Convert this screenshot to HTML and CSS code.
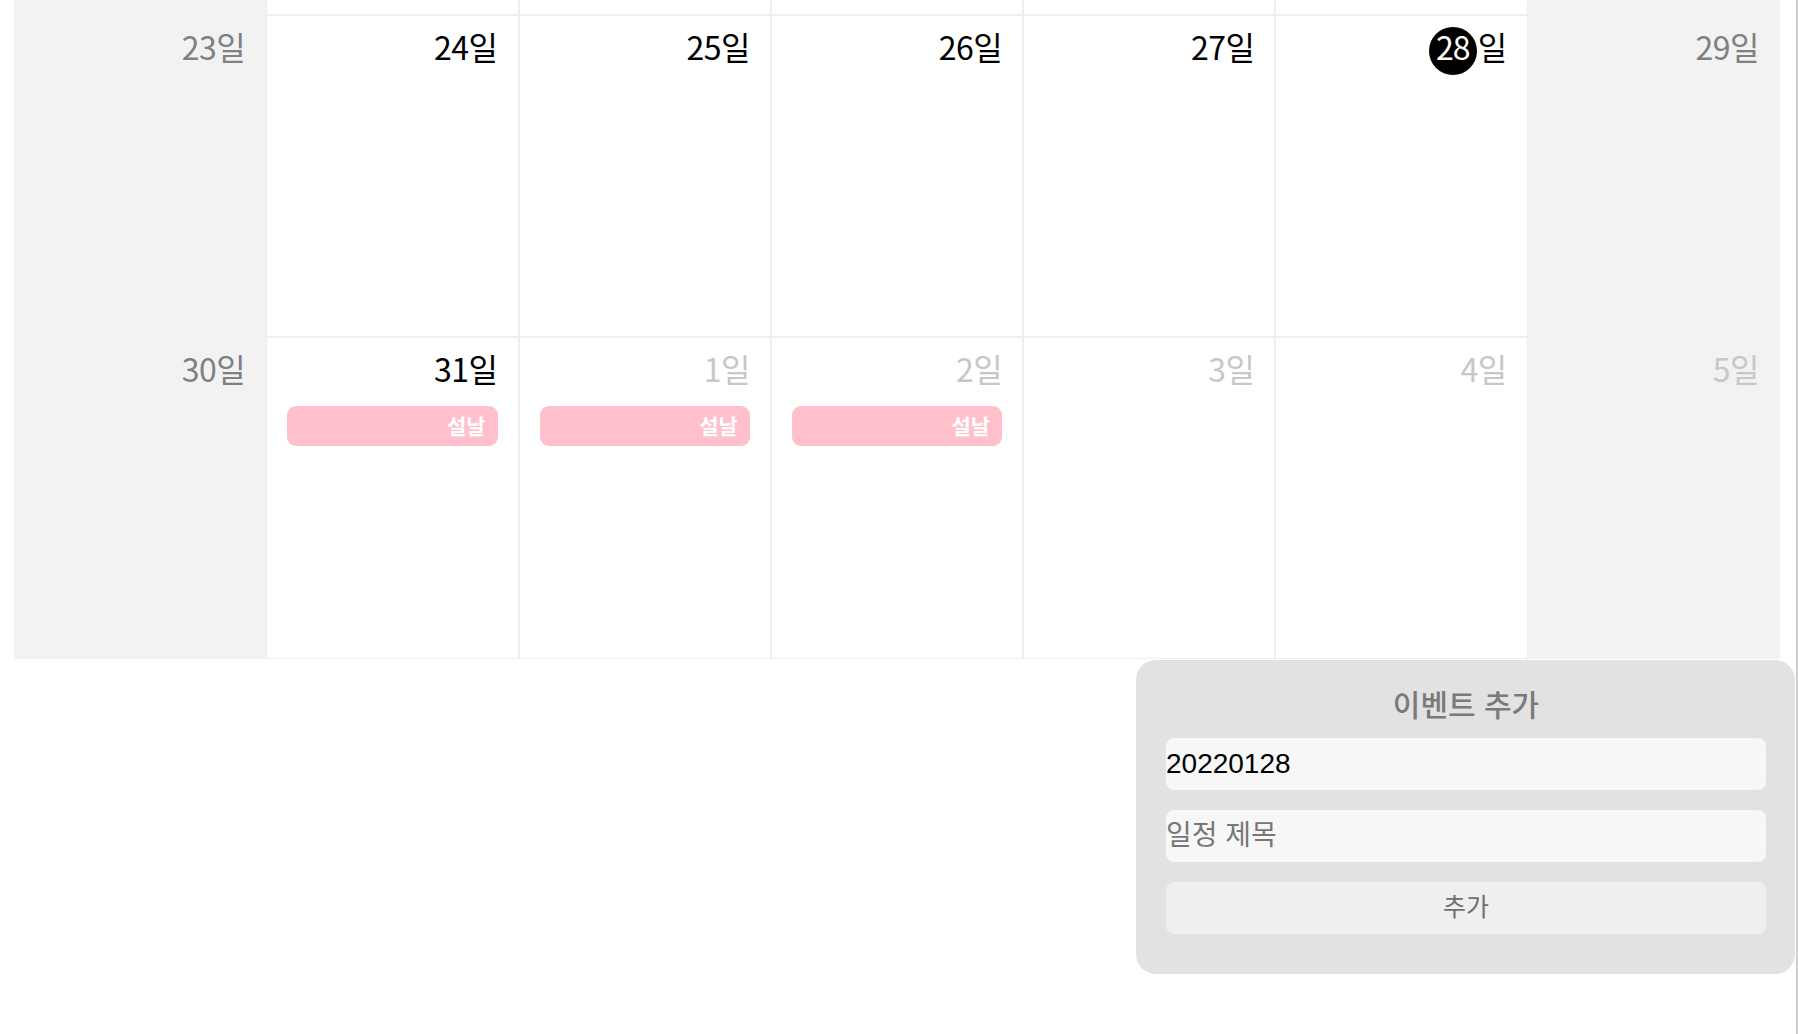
FILE: index.html
```html
<!DOCTYPE html>
<html lang="ko">
<head>
<meta charset="utf-8">
<title>캘린더</title>
<link rel="stylesheet" href="styles.css">
</head>
<body>
<div class="page">
  <main class="calendar">
    <div class="week week-partial">
      <div class="cell weekend"></div>
      <div class="cell"></div>
      <div class="cell"></div>
      <div class="cell"></div>
      <div class="cell"></div>
      <div class="cell"></div>
      <div class="cell weekend"></div>
    </div>
    <div class="week">
      <div class="cell weekend"><div class="day">23일</div></div>
      <div class="cell"><div class="day">24일</div></div>
      <div class="cell"><div class="day">25일</div></div>
      <div class="cell"><div class="day">26일</div></div>
      <div class="cell"><div class="day">27일</div></div>
      <div class="cell"><div class="day"><span class="today">28</span>일</div></div>
      <div class="cell weekend"><div class="day">29일</div></div>
    </div>
    <div class="week">
      <div class="cell weekend"><div class="day">30일</div></div>
      <div class="cell"><div class="day">31일</div><div class="event">설날</div></div>
      <div class="cell other"><div class="day">1일</div><div class="event">설날</div></div>
      <div class="cell other"><div class="day">2일</div><div class="event">설날</div></div>
      <div class="cell other"><div class="day">3일</div></div>
      <div class="cell other"><div class="day">4일</div></div>
      <div class="cell weekend other"><div class="day">5일</div></div>
    </div>
  </main>
  <div class="spacer"></div>
  <div class="scroll-edge"></div>
</div>

<form class="add-event">
  <h2 class="add-title">이벤트 추가</h2>
  <input class="field" type="text" value="20220128">
  <input class="field" type="text" placeholder="일정 제목">
  <button class="add-btn" type="button">추가</button>
</form>
</body>
</html>
```

FILE: styles.css
```css
html, body {
  margin: 0;
  padding: 0;
  background: #ffffff;
}

body {
  font-family: "Noto Sans CJK KR", "Noto Sans", sans-serif;
  overflow: hidden;
}

.page {
  display: flex;
  height: 1034px;
}

.calendar {
  margin-left: 14px;
  width: 1766px;
  flex: none;
}

.spacer {
  flex: 1;
}

.scroll-edge {
  width: 2px;
  background: #cfcfcf;
}

.week {
  display: grid;
  grid-template-columns: repeat(7, 1fr);
  height: 322px;
}

.week-partial {
  height: 15px;
}

.week-partial .cell {
  border-top: none;
}

.cell {
  box-sizing: border-box;
  border: 1px solid #efefef;
  padding: 6px 20px 0 20px;
  background: #ffffff;
  overflow: hidden;
}

.cell.weekend {
  background: #f2f2f2;
  border-color: #f2f2f2;
}

.day {
  text-align: right;
  font-size: 32px;
  line-height: 48px;
  height: 48px;
  color: #000000;
  letter-spacing: -0.5px;
}

.weekend .day {
  color: #808080;
}

.other .day {
  color: #c7c7c7;
}

.today {
  display: inline-block;
  box-sizing: border-box;
  width: 48px;
  height: 48px;
  line-height: 39px;
  border-radius: 50%;
  background: #000000;
  color: #ffffff;
  text-align: center;
  margin-right: 1px;
  letter-spacing: -1px;
}

.event {
  margin-top: 14px;
  height: 40px;
  line-height: 38px;
  border-radius: 9px;
  background: #ffc0cb;
  color: #ffffff;
  font-size: 21px;
  font-weight: 700;
  text-align: right;
  padding-right: 12px;
}

.add-event {
  position: fixed;
  top: 660px;
  right: 3px;
  width: 659px;
  height: 314px;
  box-sizing: border-box;
  padding: 23px 29px 0 30px;
  background: #e2e2e2;
  border-radius: 20px;
  display: flex;
  flex-direction: column;
}

.add-title {
  margin: 0 0 15px 0;
  height: 40px;
  line-height: 40px;
  text-align: center;
  font-family: "Noto Sans CJK KR", sans-serif;
  font-size: 30px;
  font-weight: 500;
  color: #7a7a7a;
}

.field {
  display: block;
  box-sizing: border-box;
  height: 52px;
  width: 100%;
  margin: 0 0 20px 0;
  padding: 0;
  border: none;
  outline: none;
  border-radius: 8px;
  background: #f7f7f7;
  font-family: "Liberation Sans", "Noto Sans CJK KR", sans-serif;
  font-size: 28px;
  color: #000000;
}

.field::placeholder {
  color: #777777;
}

.add-btn {
  display: block;
  box-sizing: border-box;
  height: 52px;
  width: 100%;
  margin: 0;
  padding: 0 0 6px 0;
  border: none;
  border-radius: 8px;
  background: #efefef;
  font-family: "Liberation Sans", "Noto Sans CJK KR", sans-serif;
  font-size: 25px;
  color: #707070;
}
```
